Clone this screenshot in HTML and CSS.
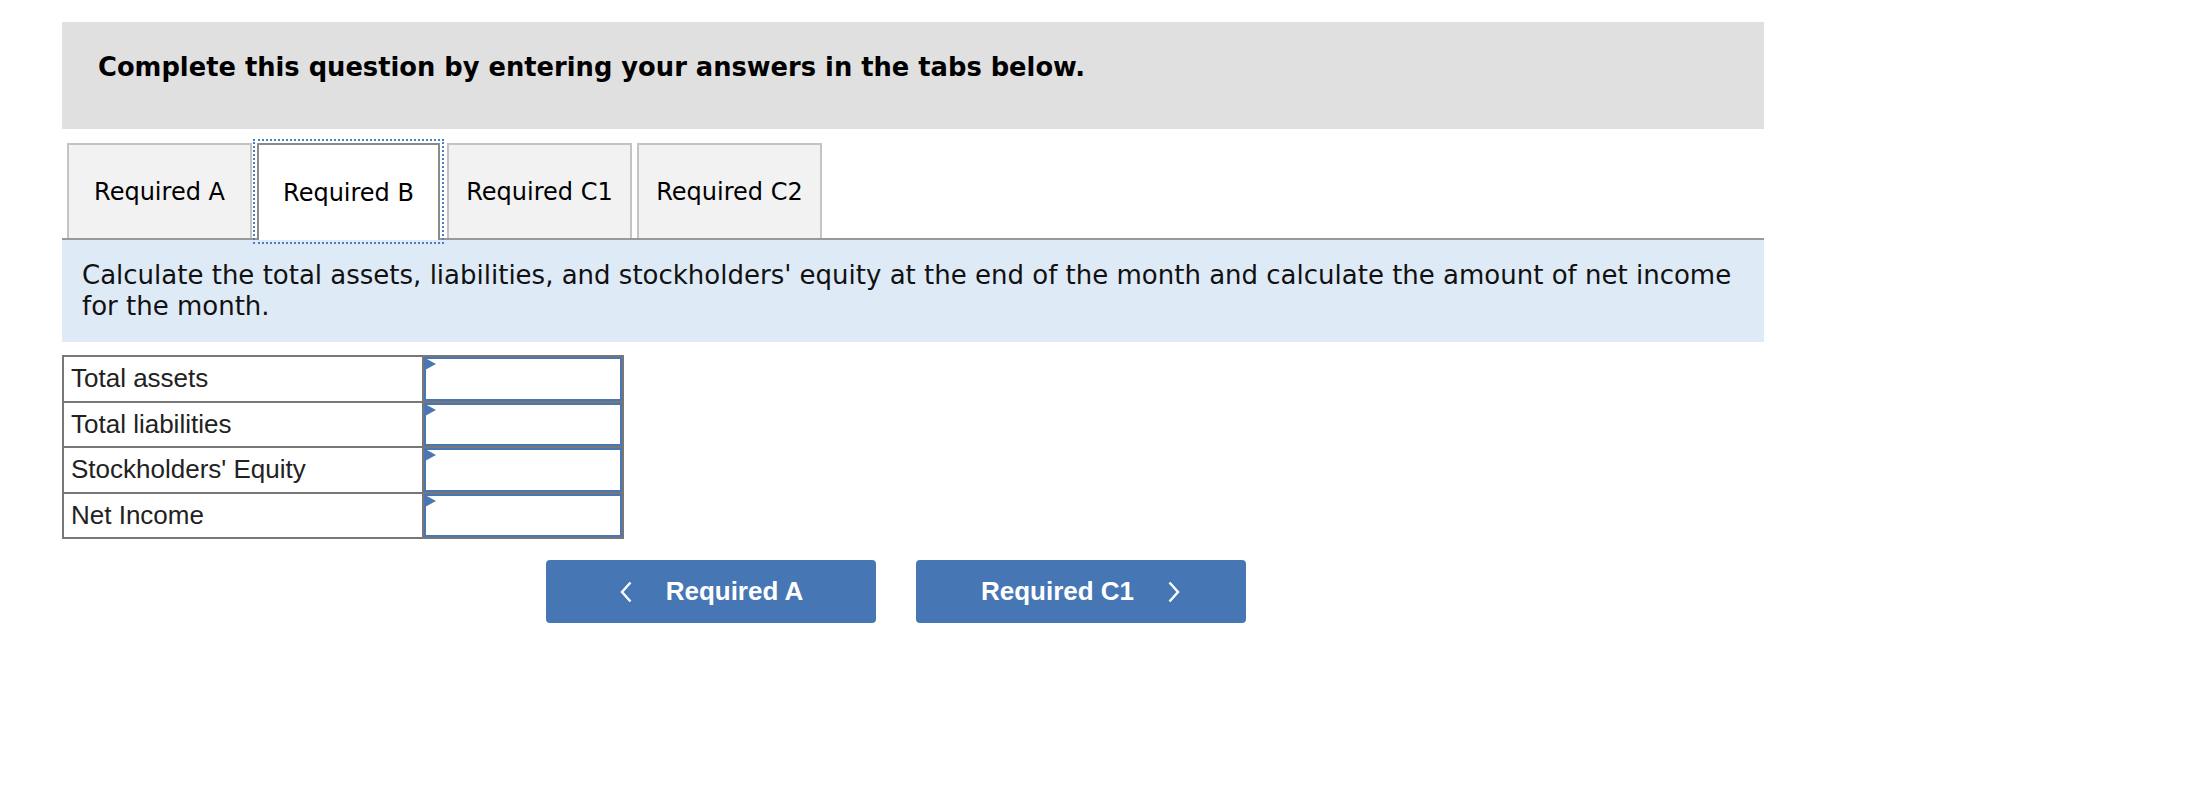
FILE: index.html
```html
<!DOCTYPE html>
<html lang="en">
<head>
<meta charset="utf-8">
<title>Complete this question</title>
<link rel="stylesheet" href="styles.css">
</head>
<body>
<div class="page">
  <div class="instructions">Complete this question by entering your answers in the tabs below.</div>

  <div class="tabbar">
    <div class="tab">Required A</div>
    <div class="tab active">Required B</div>
    <div class="tab">Required C1</div>
    <div class="tab">Required C2</div>
  </div>

  <div class="prompt">Calculate the total assets, liabilities, and stockholders' equity at the end of the month and calculate the amount of net income for the month.</div>

  <div class="answers">
    <div class="label">Total assets</div>
    <div class="cell"><div class="answer"></div></div>
    <div class="label">Total liabilities</div>
    <div class="cell"><div class="answer"></div></div>
    <div class="label">Stockholders' Equity</div>
    <div class="cell"><div class="answer"></div></div>
    <div class="label">Net Income</div>
    <div class="cell"><div class="answer"></div></div>
  </div>

  <div class="nav">
    <button class="navbtn" type="button">
      <svg class="chev" width="14" height="22" viewBox="0 0 14 22"><path d="M11.5 1.5 L3 11 L11.5 20.5" fill="none" stroke="#ffffff" stroke-width="2.4"/></svg>
      <span>Required A</span>
    </button>
    <button class="navbtn" type="button">
      <span>Required C1</span>
      <svg class="chev" width="14" height="22" viewBox="0 0 14 22"><path d="M2.5 1.5 L11 11 L2.5 20.5" fill="none" stroke="#ffffff" stroke-width="2.4"/></svg>
    </button>
  </div>
</div>
</body>
</html>
```

FILE: styles.css
```css
html, body {
  margin: 0;
  padding: 0;
  background: #ffffff;
}

.page {
  margin-left: 62px;
  padding-top: 22px;
  width: 1702px;
  font-family: "DejaVu Sans", Verdana, sans-serif;
  color: #000;
}

.instructions {
  box-sizing: border-box;
  height: 107px;
  background: #e0e0e0;
  padding: 30px 0 0 36px;
  font-weight: bold;
  font-size: 25.75px;
  line-height: 31px;
}

.tabbar {
  display: flex;
  margin-top: 14px;
  padding-left: 5px;
  border-bottom: 2px solid #999999;
}

.tab {
  box-sizing: border-box;
  width: 185px;
  height: 95px;
  margin-right: 5px;
  background: #f2f2f2;
  border: 2px solid #c4c4c4;
  border-bottom: none;
  display: flex;
  align-items: center;
  justify-content: center;
  font-size: 24px;
  color: #000;
}

.tab.active {
  width: 183px;
  margin-right: 7px;
  height: 97px;
  margin-bottom: -2px;
  background: #ffffff;
  border-color: #8c8c8c;
  outline: 2px dotted #4b7fc3;
  outline-offset: 2px;
  position: relative;
}

.prompt {
  background: #dfeaf7;
  padding: 20px 10px 20px 20px;
  font-size: 26px;
  line-height: 31px;
  color: #111;
  min-height: 101px;
  box-sizing: border-box;
}

.answers {
  display: grid;
  grid-template-columns: 358px 198px;
  grid-auto-rows: 43.5px;
  gap: 2px;
  width: max-content;
  margin-top: 13px;
  border: 2px solid #777777;
  background: #777777;
  font-family: "Liberation Sans", Arial, sans-serif;
  font-size: 26px;
  color: #222;
}

.label {
  background: #ffffff;
  display: flex;
  align-items: center;
  padding-left: 7px;
}

.cell {
  background: #ffffff;
}

.answer {
  position: relative;
  box-sizing: border-box;
  height: 100%;
  border: 2px solid #4a77b4;
  background: #ffffff;
}

.answer::before {
  content: "";
  position: absolute;
  top: -1px;
  left: -1px;
  width: 0;
  height: 0;
  border-left: 11px solid #4a77b4;
  border-top: 6px solid transparent;
  border-bottom: 6px solid transparent;
}

.nav {
  display: flex;
  gap: 40px;
  margin-top: 21px;
  margin-left: 484px;
}

.navbtn {
  width: 330px;
  height: 63px;
  border: none;
  border-radius: 4px;
  background: #4677b4;
  color: #ffffff;
  font-family: "Liberation Sans", Arial, sans-serif;
  font-weight: bold;
  font-size: 26px;
  display: flex;
  align-items: center;
  justify-content: center;
  gap: 33px;
  padding: 0;
  cursor: pointer;
}

.chev {
  display: block;
}
```
